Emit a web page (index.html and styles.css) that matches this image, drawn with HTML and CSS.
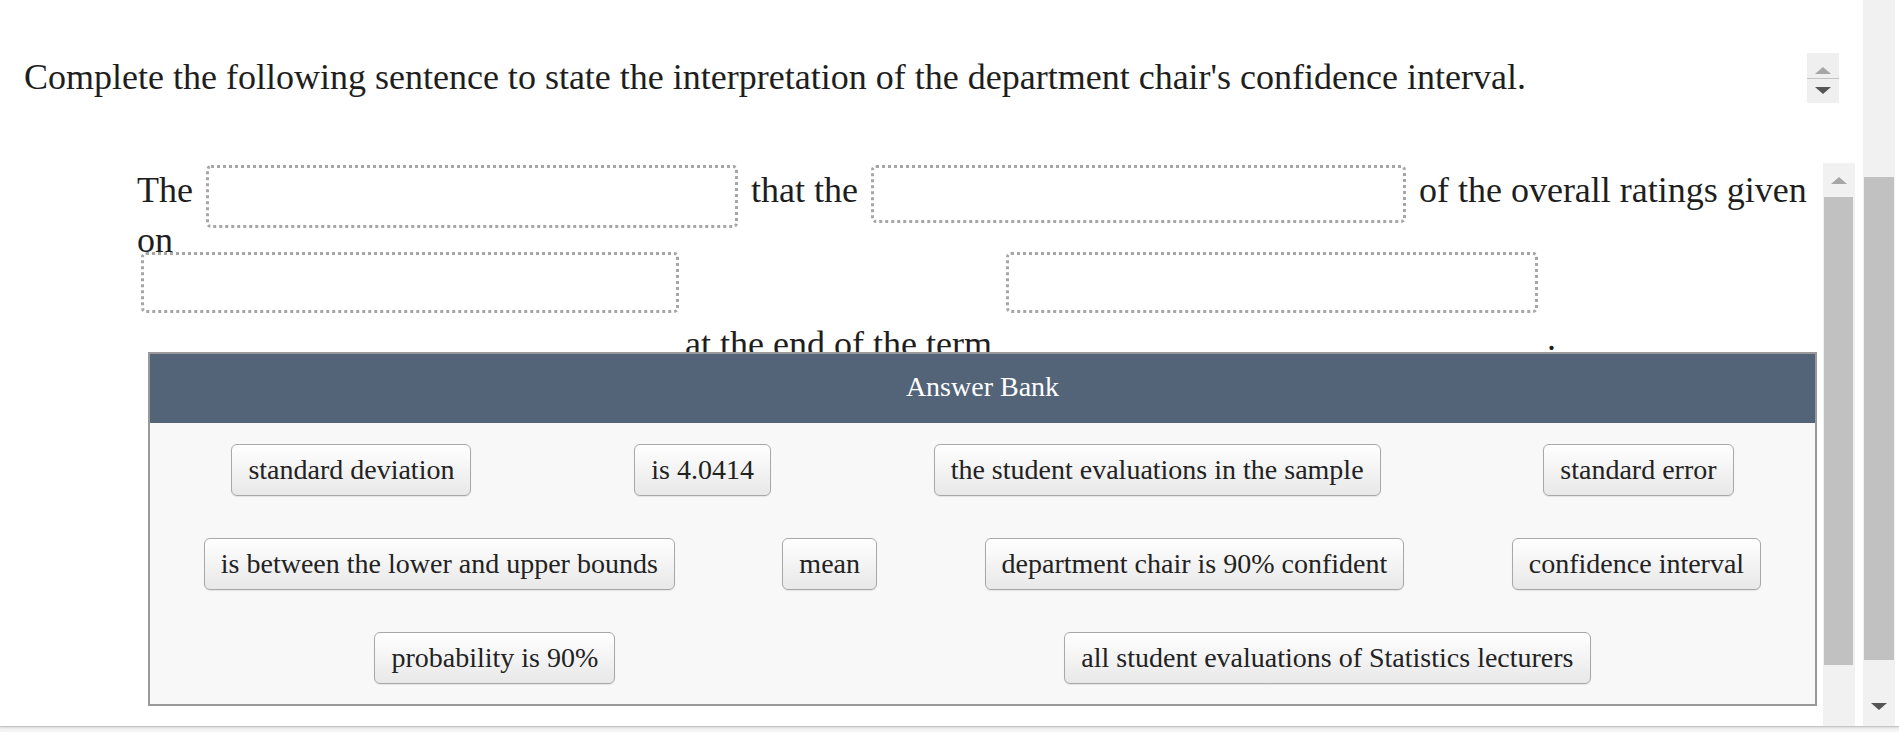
FILE: index.html
```html
<!DOCTYPE html>
<html>
<head>
<meta charset="utf-8">
<link rel="stylesheet" href="styles.css">
</head>
<body>
<div class="frame">
  <div class="main">
    <div class="title-row">
      <div class="title">Complete the following sentence to state the interpretation of the department chair's confidence interval.</div>
      <div class="spinner">
        <span class="tri-up light"></span>
        <span class="sep"></span>
        <span class="tri-down dark"></span>
      </div>
    </div>
    <div class="scroll-area">
      <div class="sentence">
        <div class="line line1">
          <span class="word w1">The</span>
          <span class="drop d1"></span>
          <span class="word w1">that the</span>
          <span class="drop d2"></span>
          <span class="word w1">of the overall ratings given</span>
        </div>
        <div class="line line2">
          <span class="word w2">on</span>
        </div>
        <div class="line line3">
          <span class="drop d3"></span>
          <span class="word w3">at the end of the term</span>
          <span class="drop d4"></span>
          <span class="word w3p">.</span>
        </div>
      </div>
      <div class="inner-sb">
        <div class="sb-btn"><span class="tri-up light"></span></div>
        <div class="sb-thumb inner-thumb"></div>
      </div>
    </div>
  </div>
  <div class="outer-sb">
    <div class="outer-top"></div>
    <div class="sb-thumb outer-thumb"></div>
    <div class="outer-bottom"><span class="tri-down dark"></span></div>
  </div>
  <div class="edge"></div>

  <div class="bank">
    <div class="bank-head">Answer Bank</div>
    <div class="bank-body">
      <div class="chip-row">
        <span class="chip">standard deviation</span>
        <span class="chip">is 4.0414</span>
        <span class="chip">the student evaluations in the sample</span>
        <span class="chip">standard error</span>
      </div>
      <div class="chip-row">
        <span class="chip">is between the lower and upper bounds</span>
        <span class="chip">mean</span>
        <span class="chip">department chair is 90% confident</span>
        <span class="chip">confidence interval</span>
      </div>
      <div class="chip-row">
        <span class="chip">probability is 90%</span>
        <span class="chip">all student evaluations of Statistics lecturers</span>
      </div>
    </div>
  </div>
</div>
<div class="bottom-strip"></div>
</body>
</html>
```

FILE: styles.css
```css
html, body {
  margin: 0;
  padding: 0;
  background: #ffffff;
  overflow: hidden;
}
body {
  font-family: "Liberation Serif", "Times New Roman", serif;
  color: #1e1e1e;
}
.frame {
  position: relative;
  display: flex;
  height: 726px;
  border-bottom: 1px solid #c6c6c6;
  box-shadow: 0 1px 2px rgba(0,0,0,0.12);
}
.main {
  width: 1863px;
  display: flex;
  flex-direction: column;
}
.title-row {
  height: 163px;
  box-sizing: border-box;
  padding: 53px 24px 0 24px;
  display: flex;
  justify-content: space-between;
  align-items: flex-start;
}
.title {
  font-size: 36px;
  line-height: 40px;
  margin-top: 4px;
  white-space: nowrap;
}
.spinner {
  width: 32px;
  height: 50px;
  background: #efefef;
  display: flex;
  flex-direction: column;
  align-items: center;
}
.tri-up, .tri-down {
  display: block;
  width: 0;
  height: 0;
  border-left: 8px solid transparent;
  border-right: 8px solid transparent;
}
.tri-up.light { border-bottom: 7px solid #a6a6a6; }
.tri-down.dark { border-top: 7px solid #555555; }
.spinner .tri-up { margin-top: 14px; }
.spinner .sep {
  display: block;
  width: 32px;
  height: 1px;
  background: #c4c4c4;
  margin-top: 4px;
}
.spinner .tri-down { margin-top: 8px; }

.scroll-area {
  flex: 1;
  display: flex;
  margin-right: 8px;
  min-height: 0;
}
.sentence {
  flex: 1;
  padding: 2px 0 0 137px;
  font-size: 36px;
}
.line {
  display: flex;
  align-items: flex-start;
  white-space: nowrap;
}
.word { display: block; }
.w1 { line-height: 40px; margin-top: 5px; }
.w2 { line-height: 24px; }
.w3 { line-height: 40px; margin-top: 72px; margin-left: 6px; }
.w3p { line-height: 40px; margin-top: 66px; margin-left: 9px; }
.drop {
  display: block;
  box-sizing: border-box;
  border: 3px dotted #a6a6a6;
  border-radius: 5px;
  background: #ffffff;
}
.d1 { width: 532px; height: 63px; margin: 0 13px; }
.d2 { width: 535px; height: 58px; margin: 0 13px; }
.d3 { width: 538px; height: 61px; margin-left: 4px; }
.d4 { width: 532px; height: 61px; margin-left: 14px; }

.inner-sb {
  width: 32px;
  background: #f1f1f1;
  display: flex;
  flex-direction: column;
}
.sb-btn {
  height: 34px;
  display: flex;
  justify-content: center;
  align-items: flex-start;
}
.sb-btn .tri-up { margin-top: 14px; }
.sb-thumb { background: #c1c1c1; }
.inner-thumb {
  height: 468px;
  width: 29px;
  margin-left: 1px;
}
.outer-sb {
  width: 32px;
  background: #f1f1f1;
  display: flex;
  flex-direction: column;
}
.outer-top { height: 177px; }
.outer-thumb {
  height: 483px;
  width: 30px;
  margin-left: 1px;
}
.outer-bottom {
  flex: 1;
  display: flex;
  justify-content: center;
  align-items: flex-start;
}
.outer-bottom .tri-down { margin-top: 43px; }
.edge { width: 4px; }

.bank {
  position: absolute;
  left: 148px;
  top: 352px;
  width: 1669px;
  height: 354px;
  box-sizing: border-box;
  border: 2px solid #999999;
  background: #f8f8f8;
  display: flex;
  flex-direction: column;
}
.bank-head {
  height: 69px;
  padding-bottom: 3px;
  box-sizing: border-box;
  background: #536479;
  color: #ffffff;
  font-size: 28px;
  display: flex;
  align-items: center;
  justify-content: center;
}
.bank-body {
  padding: 21px 0 20px 0;
  display: flex;
  flex-direction: column;
  gap: 42px;
}
.chip-row {
  display: flex;
  justify-content: space-around;
}
.chip {
  display: block;
  box-sizing: border-box;
  height: 52px;
  padding: 9px 16px 0 16px;
  font-size: 28px;
  line-height: 32px;
  white-space: nowrap;
  color: #222222;
  border: 1px solid #a8a8a8;
  border-radius: 6px;
  background: linear-gradient(#ffffff, #e8e8e8);
  box-shadow: 0 1px 1px rgba(0,0,0,0.08);
}
.bottom-strip {
  height: 5px;
  background: #f4f4f4;
}
```
